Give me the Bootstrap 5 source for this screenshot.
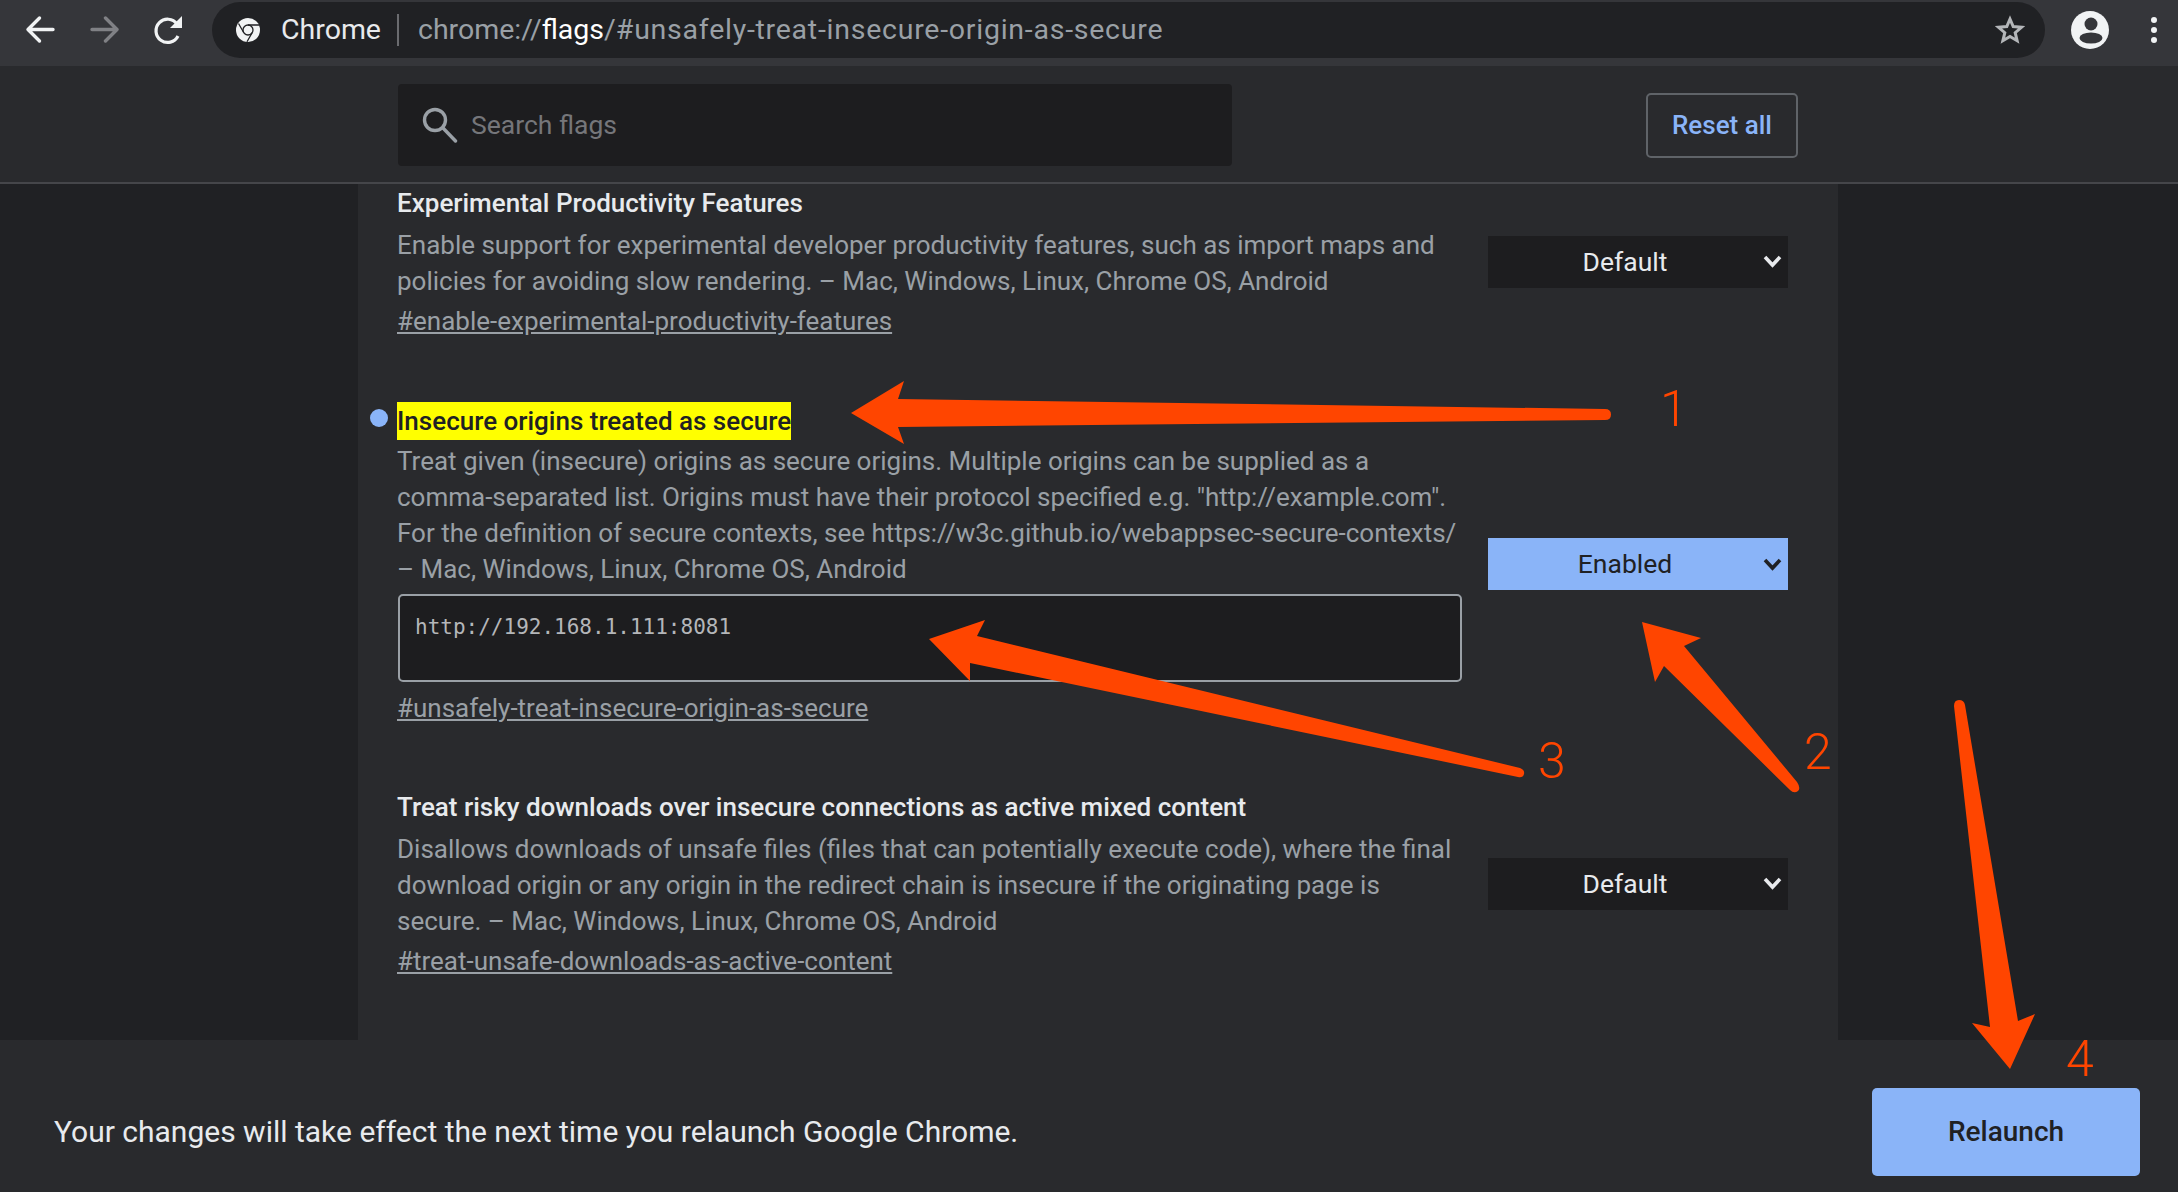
<!DOCTYPE html>
<html lang="en">
<head>
  <meta charset="UTF-8" />
  <title>chrome://flags</title>
  <meta name="viewport" content="width=device-width, initial-scale=1" />
  <link href="https://cdn.jsdelivr.net/npm/bootstrap@5.3.3/dist/css/bootstrap.min.css" rel="stylesheet" />
  <style>
    html, body {
      height: 100%;
    }
    body {
      background-color: #202124;
      color: #9aa0a6;
      font-family: Roboto, "Liberation Sans", sans-serif;
      font-size: 26px;
      overflow: hidden;
      position: relative;
    }
    /* browser toolbar */
    .tool-bar {
      height: 66px;
      flex: none;
      background-color: #35363a;
      padding-left: 25px;
    }
    .tool-gap {
      margin-left: 34px;
    }
    .omni-box {
      height: 56px;
      margin: 2px 0 8px 29px;
      padding: 0 20px 0 24px;
      background-color: #202124;
      border-radius: 28px;
      font-size: 28.5px;
    }
    .omni-site {
      color: #e8eaed;
      margin-left: 21px;
    }
    .omni-sep {
      width: 2px;
      height: 32px;
      background-color: #6a6b6f;
      margin: 0 19px 0 16px;
    }
    .omni-url b {
      color: #fff;
      font-weight: 400;
    }
    .omni-hash {
      letter-spacing: .75px;
    }
    .tool-right {
      width: 133px;
      flex: none;
      padding-left: 25px;
    }
    .tool-dots {
      margin-left: 38px;
    }
    /* flags header */
    .flags-head {
      height: 118px;
      flex: none;
      background-color: #292a2d;
      border-bottom: 2px solid #45464a;
      padding: 2px 0 0 398px;
    }
    .search-box {
      width: 834px;
      height: 82px;
      padding-left: 24px;
      background-color: #1d1d1f;
      border-radius: 4px;
    }
    .search-box .form-control {
      background: transparent;
      border: 0;
      box-shadow: none;
      padding: 0 0 0 13px;
      font-size: 26.5px;
      color: #e8eaed;
    }
    .search-box .form-control::placeholder {
      color: #75767a;
    }
    .btn-reset {
      width: 152px;
      height: 65px;
      margin-left: 414px;
      padding: 0;
      background: transparent;
      border: 2px solid #5f6368;
      border-radius: 5px;
      color: #8ab4f8;
      font-size: 26px;
      font-weight: 500;
    }
    /* experiments list */
    .flags-main {
      min-height: 0;
    }
    .flags-col {
      width: 1480px;
      height: 100%;
      margin-left: 358px;
      padding-left: 39px;
      background-color: #292a2d;
      overflow: hidden;
    }
    .flag-row {
      margin-bottom: 63px;
    }
    .flag-row.row-two {
      margin-bottom: 62px;
    }
    .flag-row.row-three {
      margin-bottom: 0;
    }
    .flag-text {
      width: 1065px;
      flex: none;
    }
    .flag-title {
      position: relative;
      height: 38px;
      line-height: 38px;
      font-size: 26px;
      font-weight: 500;
      color: #e8eaed;
    }
    .flag-title .hilite {
      display: inline-block;
      background-color: #ffff00;
      color: #202124;
    }
    .flag-dot {
      position: absolute;
      left: -27px;
      top: 7px;
      width: 18px;
      height: 18px;
      border-radius: 50%;
      background-color: #8ab4f8;
    }
    .flag-desc {
      margin: 5px 0 0;
      line-height: 36px;
    }
    .row-two .flag-desc {
      margin-top: 3px;
    }
    .flag-link {
      display: block;
      line-height: 36px;
      margin-top: 4px;
      color: #9aa0a6;
    }
    .flag-input {
      display: block;
      width: 1064px;
      height: 88px;
      margin: 7px 0 8px 1px;
      padding: 18px 15px;
      background-color: #1d1d1f;
      border: 2px solid #9aa0a6;
      border-radius: 5px;
      color: #b4b6b9;
      font-family: "DejaVu Sans Mono", monospace;
      font-size: 21px;
      line-height: 26px;
      resize: none;
    }
    .flag-input:focus {
      background-color: #1d1d1f;
      border-color: #9aa0a6;
      box-shadow: none;
      color: #b4b6b9;
    }
    .flag-select {
      width: 300px;
      height: 52px;
      flex: none;
      margin-left: 26px;
      padding: 0 26px 0 0;
      border: 0;
      border-radius: 0;
      box-shadow: none;
      background-color: #1d1d1f;
      background-image: url("data:image/svg+xml,%3csvg xmlns='http://www.w3.org/2000/svg' viewBox='0 0 19 13'%3e%3cpath fill='none' stroke='%23e8eaed' stroke-width='3.6' d='M2 2l7.5 8L17 2'/%3e%3c/svg%3e");
      background-position: right 6px center;
      background-size: 19px 13px;
      color: #e8eaed;
      font-size: 26.5px;
      text-align: center;
      text-align-last: center;
    }
    .flag-select.is-on {
      background-color: #8ab4f8;
      background-image: url("data:image/svg+xml,%3csvg xmlns='http://www.w3.org/2000/svg' viewBox='0 0 19 13'%3e%3cpath fill='none' stroke='%23202124' stroke-width='3.6' d='M2 2l7.5 8L17 2'/%3e%3c/svg%3e");
      color: #202124;
    }
    /* relaunch bar */
    .relaunch-bar {
      height: 152px;
      flex: none;
      padding: 48px 38px 16px 54px;
      background-color: #292a2d;
      color: #e8eaed;
      font-size: 30px;
    }
    .relaunch-msg {
      margin-bottom: 2px;
    }
    .btn-relaunch {
      width: 268px;
      height: 88px;
      padding: 0;
      background-color: #8ab4f8;
      border: 0;
      border-radius: 5px;
      color: #202124;
      font-size: 28px;
      font-weight: 500;
    }
    /* hand drawn marks on top of the screenshot */
    .note-layer {
      position: absolute;
      top: 0;
      left: 0;
      pointer-events: none;
    }
    .note-layer text {
      fill: #ff4500;
      font-family: Roboto, sans-serif;
      font-size: 50px;
      font-weight: 300;
    }
  </style>
</head>
<body class="d-flex flex-column">

  <!-- Browser toolbar -->
  <div class="tool-bar d-flex">
    <svg width="30" height="66" viewBox="0 0 30 66" fill="none" stroke="#f1f3f4" stroke-width="3.4" stroke-linecap="round" stroke-linejoin="round"><path d="M3 29.5h25M14.5 18L3 29.5 14.5 41"/></svg>
    <svg class="tool-gap" width="30" height="66" viewBox="0 0 30 66" fill="none" stroke="#808185" stroke-width="3.4" stroke-linecap="round" stroke-linejoin="round"><path d="M3 29.5h25M16.5 18L28 29.5 16.5 41"/></svg>
    <svg class="tool-gap" width="30" height="66" viewBox="0 0 30 66"><path fill="none" stroke="#f1f3f4" stroke-width="3.2" d="M25 36a11.6 11.6 0 1 1-1-12"/><path fill="#f1f3f4" d="M29 16v12H17z"/></svg>

    <div class="omni-box d-flex align-items-center flex-grow-1">
      <svg width="24" height="24" viewBox="0 0 24 24" fill="none" stroke="#202124" stroke-width="1.3">
        <circle cx="12" cy="12" r="12" fill="#f1f3f4" stroke="none"/>
        <circle cx="12" cy="12" r="5"/>
        <path d="M12 7h11M7.700 14.500L2.500 5.500M16.300 14.500L11 23.700"/>
      </svg>
      <span class="omni-site">Chrome</span>
      <span class="omni-sep"></span>
      <span class="omni-url flex-grow-1">chrome://<b>flags</b>/<span class="omni-hash">#unsafely-treat-insecure-origin-as-secure</span></span>
      <svg width="30" height="30" viewBox="0 0 30 30" fill="none" stroke="#b4b6b9" stroke-width="3"><path d="M15 4l3.200 7.600 8.200.7-6.200 5.400 1.900 8L15 21.400l-7.100 4.300 1.900-8-6.200-5.400 8.200-.7z"/></svg>
    </div>

    <div class="tool-right d-flex align-items-start">
      <svg class="mt-2" width="40" height="44" viewBox="0 0 40 44"><circle cx="20" cy="22" r="19" fill="#f1f3f4"/><circle cx="21" cy="16" r="6.500" fill="#35363a"/><ellipse cx="21" cy="30" rx="11.500" ry="5.500" fill="#35363a"/></svg>
      <svg class="tool-dots" width="12" height="66" viewBox="0 0 12 66" fill="#f1f3f4"><circle cx="6" cy="20" r="3"/><circle cx="6" cy="30" r="3"/><circle cx="6" cy="40" r="3"/></svg>
    </div>
  </div>

  <!-- Search header -->
  <div class="flags-head d-flex align-items-center">
    <div class="search-box d-flex align-items-center">
      <svg class="flex-shrink-0" width="36" height="36" viewBox="0 0 36 36" fill="none" stroke="#9aa0a6" stroke-width="3.400" stroke-linecap="round"><circle cx="13" cy="13" r="10.500"/><path d="M21 21l12.500 13"/></svg>
      <input class="form-control" type="text" placeholder="Search flags" />
    </div>
    <button class="btn btn-reset" type="button">Reset all</button>
  </div>

  <!-- Experiments -->
  <div class="flags-main flex-grow-1">
    <div class="flags-col">
      <div class="flag-row d-flex align-items-center">
        <div class="flag-text">
          <div class="flag-title">Experimental Productivity Features</div>
          <p class="flag-desc">Enable support for experimental developer productivity features, such as import maps and<br>policies for avoiding slow rendering. – Mac, Windows, Linux, Chrome OS, Android</p>
          <a class="flag-link" href="#">#enable-experimental-productivity-features</a>
        </div>
        <select class="form-select flag-select"><option>Default</option></select>
      </div>

      <div class="flag-row row-two d-flex align-items-center">
        <div class="flag-text">
          <div class="flag-title"><span class="flag-dot"></span><span class="hilite">Insecure origins treated as secure</span></div>
          <p class="flag-desc">Treat given (insecure) origins as secure origins. Multiple origins can be supplied as a<br>comma-separated list. Origins must have their protocol specified e.g. "http://example.com".<br>For the definition of secure contexts, see https://w3c.github.io/webappsec-secure-contexts/<br>– Mac, Windows, Linux, Chrome OS, Android</p>
          <textarea class="form-control flag-input">http://192.168.1.111:8081</textarea>
          <a class="flag-link" href="#">#unsafely-treat-insecure-origin-as-secure</a>
        </div>
        <select class="form-select flag-select is-on"><option>Enabled</option></select>
      </div>

      <div class="flag-row row-three d-flex align-items-center">
        <div class="flag-text">
          <div class="flag-title">Treat risky downloads over insecure connections as active mixed content</div>
          <p class="flag-desc">Disallows downloads of unsafe files (files that can potentially execute code), where the final<br>download origin or any origin in the redirect chain is insecure if the originating page is<br>secure. – Mac, Windows, Linux, Chrome OS, Android</p>
          <a class="flag-link" href="#">#treat-unsafe-downloads-as-active-content</a>
        </div>
        <select class="form-select flag-select"><option>Default</option></select>
      </div>
    </div>
  </div>

  <!-- Relaunch -->
  <div class="relaunch-bar d-flex align-items-center justify-content-between">
    <span class="relaunch-msg">Your changes will take effect the next time you relaunch Google Chrome.</span>
    <button class="btn btn-relaunch" type="button">Relaunch</button>
  </div>

  <!-- Orange annotations -->
  <svg class="note-layer" width="2178" height="1192" viewBox="0 0 2178 1192" fill="#ff4500">
    <path d="M851 413L904 381 898 399 1605 409Q1611 409 1611 414.500 1611 420 1605 420L898 427 904 444z"/>
    <path d="M1642 622L1701 638 1684 646 1797 782Q1801 788 1798 791 1794 794 1790 790L1664 666 1655 682z"/>
    <path d="M929 639L985 620 977 636 1520 768Q1525 770 1524 774 1523 778 1518 777L970 663 970 681z"/>
    <path d="M2010 1069L2035 1014 2018 1021 1965 705Q1964 700 1959 700 1954 700 1954 706L1990 1027 1972 1023z"/>
    <text x="1660" y="426">1</text>
    <text x="1804" y="769">2</text>
    <text x="1538" y="778">3</text>
    <text x="2066" y="1076">4</text>
  </svg>

  <script src="https://cdn.jsdelivr.net/npm/bootstrap@5.3.3/dist/js/bootstrap.bundle.min.js"></script>
</body>
</html>
